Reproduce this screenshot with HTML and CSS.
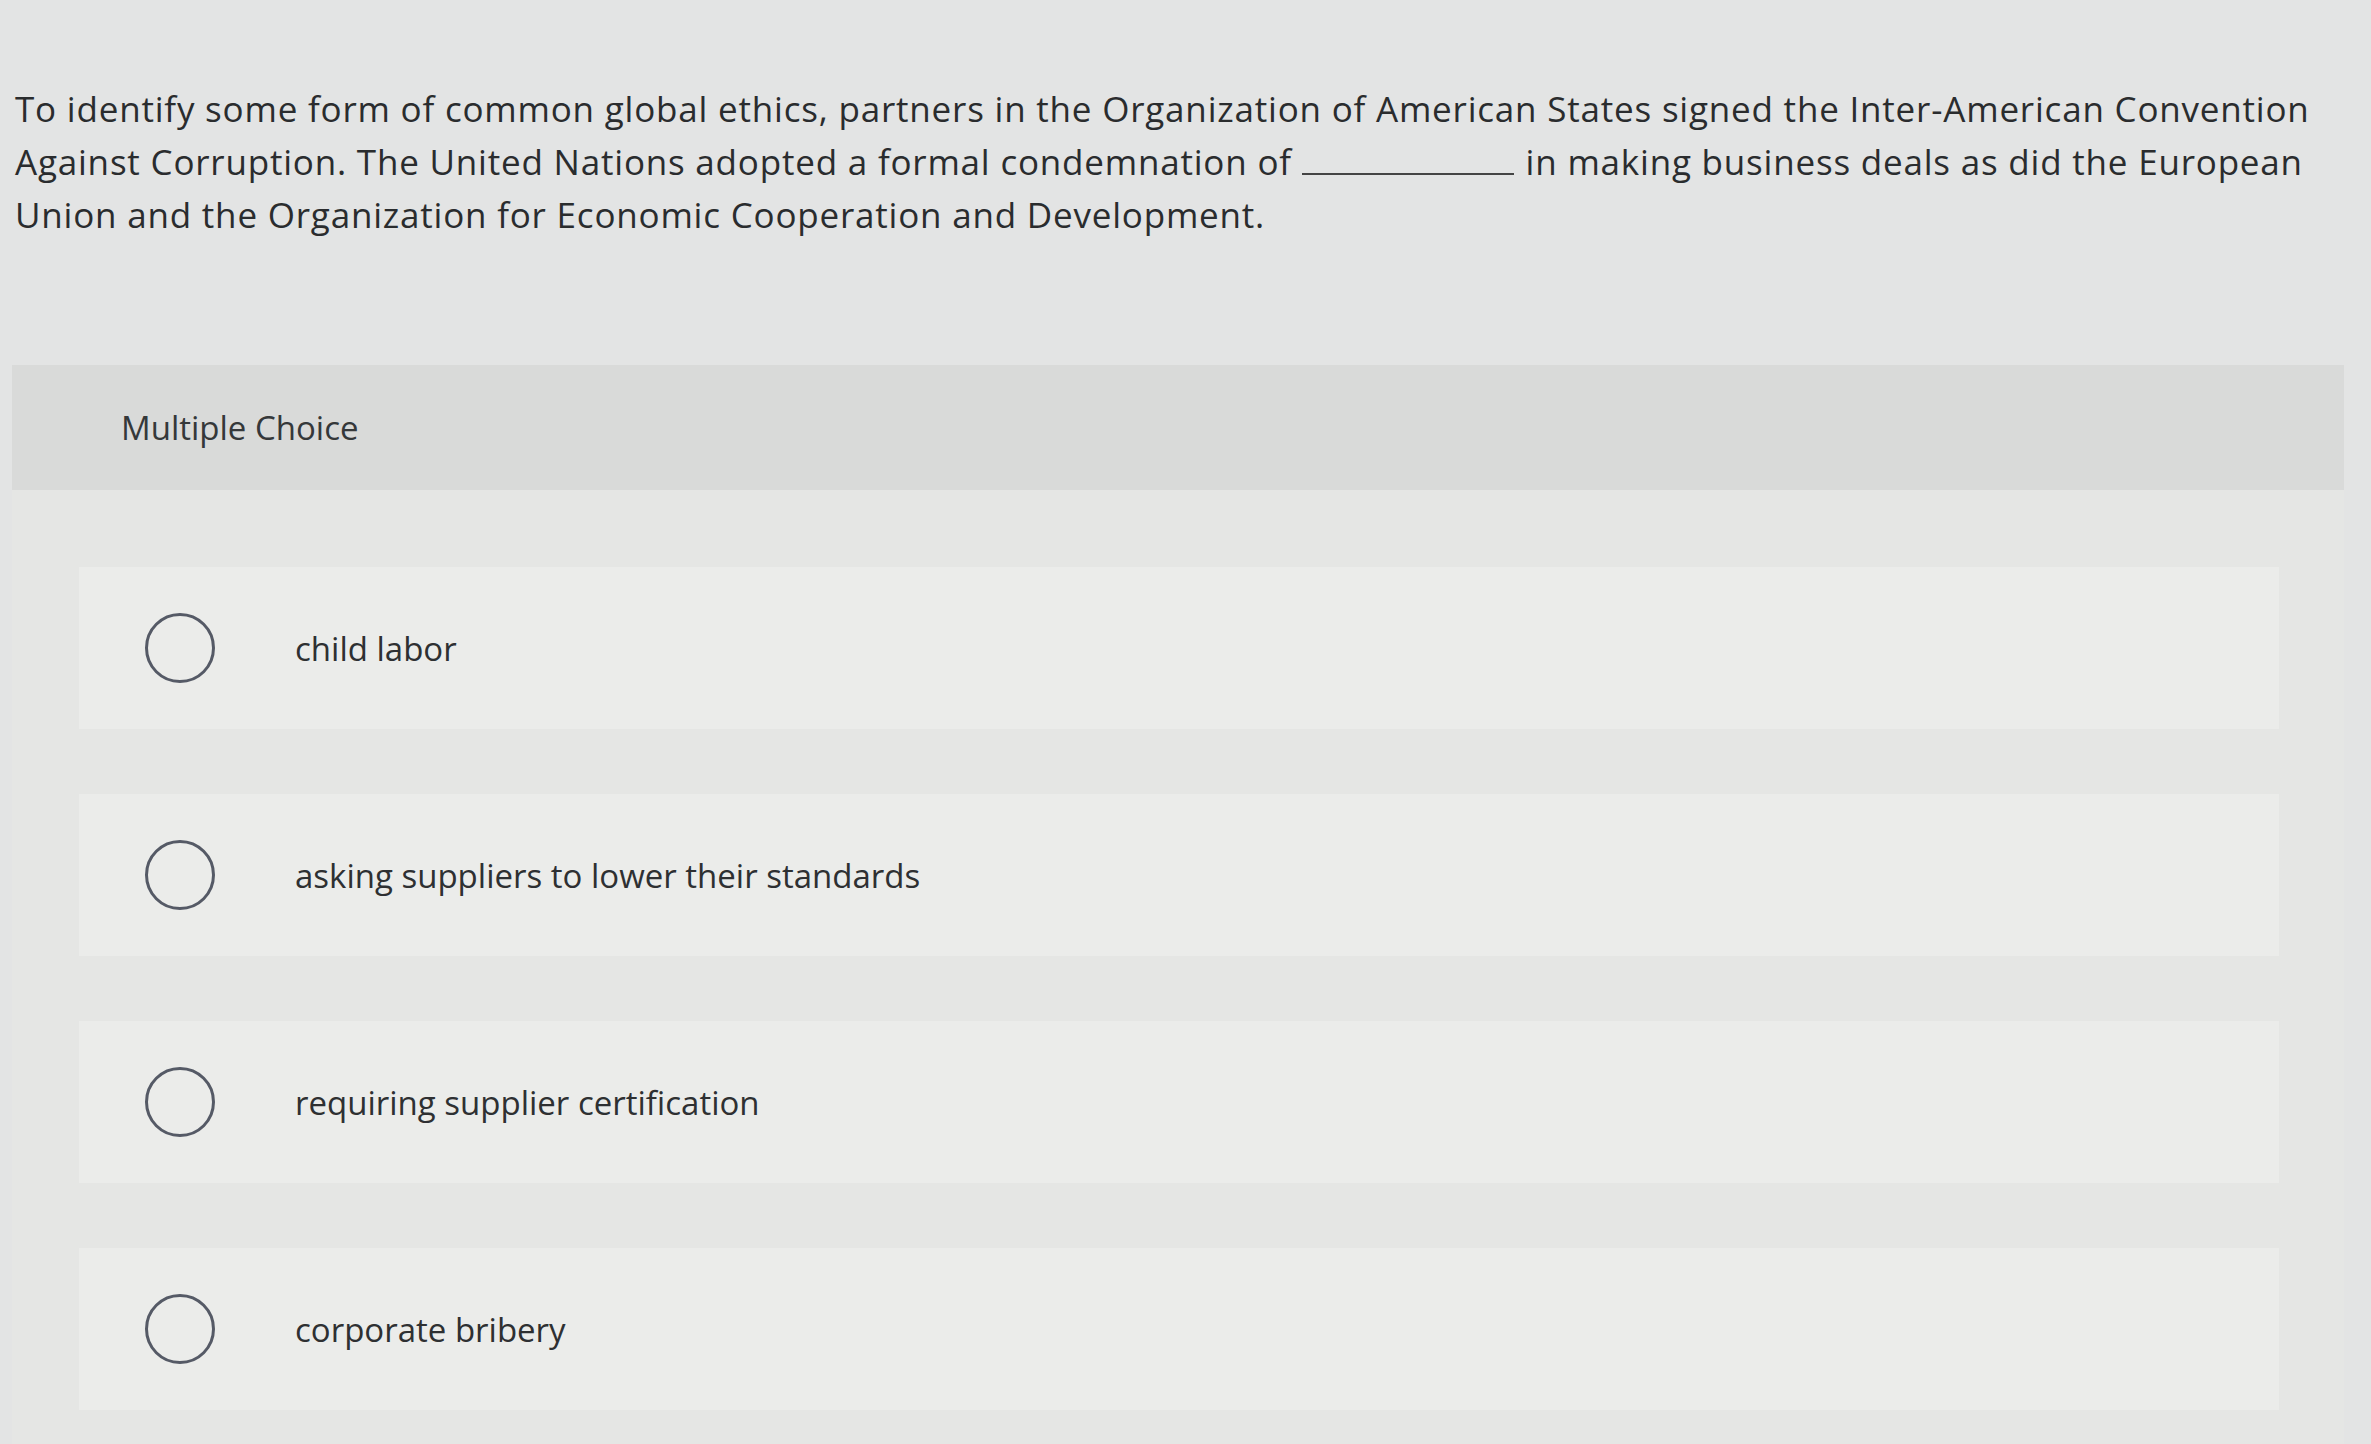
FILE: index.html
```html
<!DOCTYPE html>
<html lang="en">
<head>
<meta charset="utf-8">
<title>Multiple Choice</title>
<link rel="stylesheet" href="styles.css">
</head>
<body>
<main class="page">
  <p class="question">To identify some form of common global ethics, partners in the Organization of American States signed the Inter-American Convention<br>Against Corruption. The United Nations adopted a formal condemnation of <span class="blank"></span> in making business deals as did the European<br>Union and the Organization for Economic Cooperation and Development.</p>
  <section class="panel">
    <header class="panel-head">Multiple Choice</header>
    <div class="options">
      <label class="option"><span class="radio"></span><span class="opt-text">child labor</span></label>
      <label class="option"><span class="radio"></span><span class="opt-text">asking suppliers to lower their standards</span></label>
      <label class="option"><span class="radio"></span><span class="opt-text">requiring supplier certification</span></label>
      <label class="option"><span class="radio"></span><span class="opt-text">corporate bribery</span></label>
    </div>
  </section>
</main>
</body>
</html>
```
FILE: styles.css
```css
html, body {
  margin: 0;
  padding: 0;
  background: #e3e4e4;
  font-family: "Open Sans", "Lato", "Liberation Sans", sans-serif;
  color: #2c2e30;
}
.page {
  padding: 82px 27px 0 12px;
  height: 1444px;
  box-sizing: border-box;
  overflow: hidden;
}
.question {
  margin: 0 0 124px 3px;
  font-size: 35px;
  line-height: 53px;
  letter-spacing: 0.8px;
  white-space: nowrap;
  color: #2a2c2e;
}
.blank {
  display: inline-block;
  width: 212px;
  border-bottom: 2px solid #444;
  vertical-align: baseline;
  margin-right: 2px;
}
.panel {
  background: #e5e6e4;
}
.panel-head {
  background: #d9dad9;
  height: 125px;
  display: flex;
  align-items: center;
  padding-left: 109px;
  font-size: 33px;
  color: #35383a;
}
.options {
  display: flex;
  flex-direction: column;
  gap: 65px;
  padding: 77px 65px 40px 67px;
}
.option {
  display: flex;
  align-items: center;
  height: 162px;
  background: #ebecea;
  padding-left: 66px;
}
.radio {
  width: 64px;
  height: 64px;
  border: 3px solid #555a66;
  border-radius: 50%;
  flex: none;
}
.opt-text {
  margin-left: 80px;
  font-size: 33px;
  color: #2e3032;
}
```
